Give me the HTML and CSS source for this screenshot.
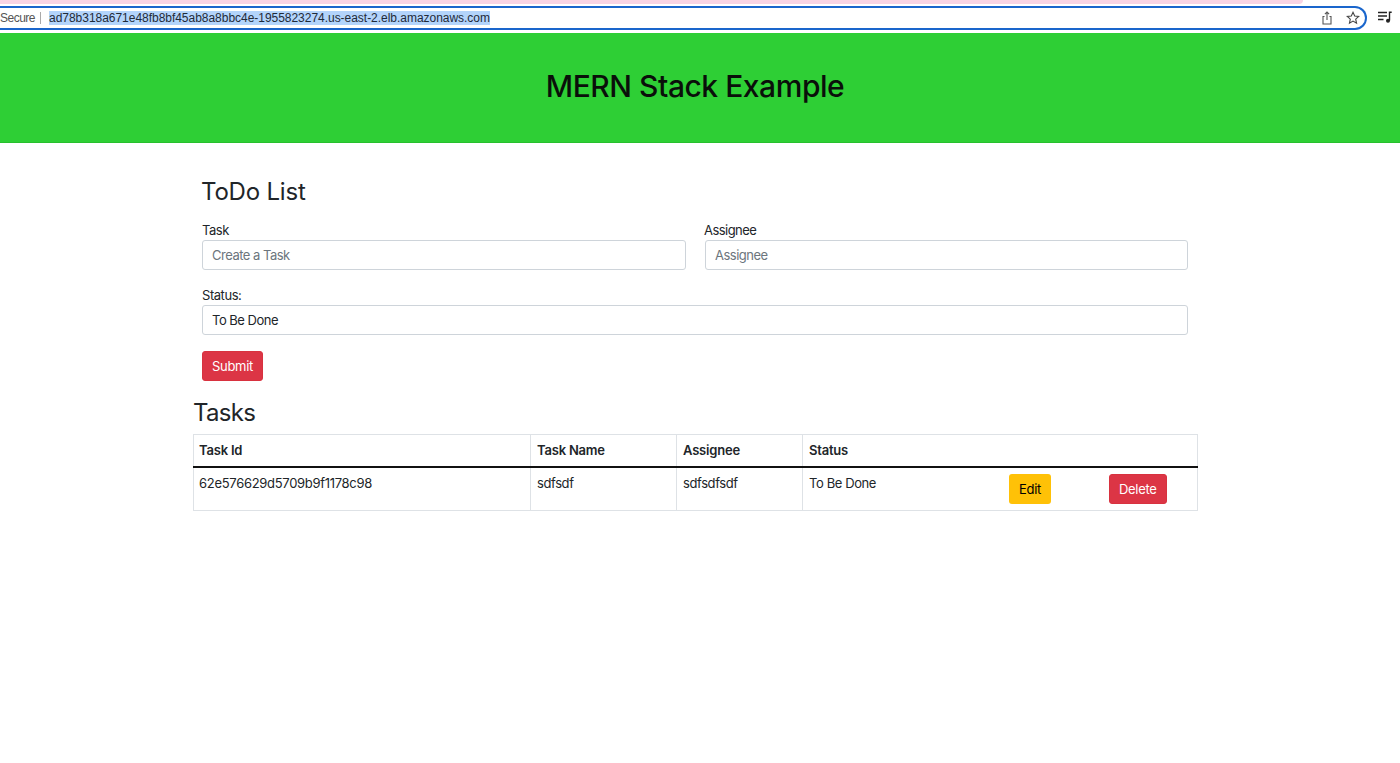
FILE: index.html
```html
<!DOCTYPE html>
<html lang="en">
<head>
<meta charset="utf-8">
<title>MERN Stack Example</title>
<link rel="stylesheet" href="styles.css">
</head>
<body>
<div class="chrome">
  <div class="pink"></div>
  <div class="bar">
    <div class="omnibox">
      <span class="secure">Secure</span>
      <span class="sep"></span>
      <span class="url">ad78b318a671e48fb8bf45ab8a8bbc4e-1955823274.us-east-2.elb.amazonaws.com</span>
      <span class="omni-icons">
        <svg class="ic" width="14" height="14" viewBox="0 0 14 14" fill="none" stroke="#555" stroke-width="1.1"><path d="M4.5 5.5H3v7.5h8V5.5H9.5"/><path d="M7 9V1.2M4.9 3.2 7 1.1l2.1 2.1"/></svg>
        <svg class="ic" width="14" height="14" viewBox="0 0 14 14" fill="none" stroke="#444" stroke-width="1.1"><path d="M7 1.3 8.7 5l4 .45-3 2.7.85 4L7 10.1l-3.55 2.05.85-4-3-2.7 4-.45z"/></svg>
      </span>
    </div>
    <svg class="media" width="14" height="12" viewBox="0 0 14 12" fill="none" stroke="#222" stroke-width="1.4"><path d="M0 1.5h9M0 5h9M0 8.5h5.5"/><path d="M11.5 9.5V1.2h2.2"/><circle cx="10" cy="9.8" r="1.3" fill="#222"/></svg>
  </div>
</div>
<header class="hero"><h1>MERN Stack Example</h1></header>
<main class="container">
  <form class="todo">
    <h2 class="form-title">ToDo List</h2>
    <div class="row">
      <div class="field">
        <label for="task">Task</label>
        <input id="task" class="control" placeholder="Create a Task">
      </div>
      <div class="field">
        <label for="assignee" class="shift-left">Assignee</label>
        <input id="assignee" class="control" placeholder="Assignee">
      </div>
    </div>
    <div class="field status">
      <label for="status">Status:</label>
      <input id="status" class="control" value="To Be Done">
    </div>
    <button type="button" class="btn danger">Submit</button>
  </form>
  <h2 class="tasks-title">Tasks</h2>
  <table class="tasks">
    <colgroup>
      <col class="c1"><col class="c2"><col class="c3"><col class="c4"><col class="c5"><col class="c6">
    </colgroup>
    <thead>
      <tr><th class="first">Task Id</th><th>Task Name</th><th>Assignee</th><th class="open-right">Status</th><th class="open"></th><th class="open-left"></th></tr>
    </thead>
    <tbody>
      <tr>
        <td class="first id">62e576629d5709b9f1178c98</td>
        <td>sdfsdf</td>
        <td>sdfsdfsdf</td>
        <td class="open-right">To Be Done</td>
        <td class="open action"><button type="button" class="btn warning">Edit</button></td>
        <td class="open-left action"><button type="button" class="btn danger">Delete</button></td>
      </tr>
    </tbody>
  </table>
</main>
</body>
</html>
```
FILE: styles.css
```css
* { box-sizing: border-box; }
html, body { margin: 0; padding: 0; background: #fff; }
body { font-family: Inter, "Liberation Sans", sans-serif; color: #212529; height: 763px; overflow: hidden; }

.chrome { height: 33px; background: #fff; position: relative; }
.pink { height: 4px; width: 1303px; background: #f8d4e4; border-bottom-right-radius: 6px; }
.bar { display: flex; align-items: flex-start; padding-top: 2px; }
.omnibox { width: 1367px; height: 24px; border: 2px solid #1a66cc; border-left: 0; border-radius: 0 12px 12px 0; display: flex; align-items: center; font-family: "Liberation Sans", sans-serif; font-size: 12px; color: #1f2a38; }
.secure { color: #555; margin-right: 5px; letter-spacing: -0.5px; }
.sep { width: 1px; height: 12px; background: #aaa; margin-right: 8px; }
.url { background: #b3d4fb; line-height: 14px; letter-spacing: -0.03px; }
.omni-icons { margin-left: auto; display: flex; gap: 12px; padding-right: 5px; align-items: center; }
.ic { display: block; }
.media { margin: 5px 0 0 11px; }

.hero { height: 110px; background: #2ecf35; display: flex; align-items: center; justify-content: center; border-bottom: 1px solid #27c02e; }
.hero h1 { margin: 0 0 3px -10px; font-size: 30px; font-weight: 500; line-height: 36px; color: #0a0f0a; letter-spacing: -0.45px; }

.container { width: 1004px; margin-left: 193px; }
.todo { padding: 34px 9px 0; font-size: 14px; }
.form-title { margin: 0 0 14px -1px; font-size: 24px; font-weight: 400; line-height: 30px; letter-spacing: -0.2px; }
.row { display: grid; grid-template-columns: 484px 483px; column-gap: 19px; }
.field { display: flex; flex-direction: column; }
.field label { font-size: 13px; line-height: 18px; padding-bottom: 1px; color: #212529; letter-spacing: -0.45px; }
.field .shift-left { margin-left: -1px; letter-spacing: -0.55px; }
.control { height: 30px; width: 100%; border: 1px solid #ced4da; border-radius: 3px; padding: 0 9px; font: 13px Inter, sans-serif; letter-spacing: -0.5px; color: #212529; background: #fff; }
.control::placeholder { color: #6c757d; opacity: 1; }
.status { margin-top: 16px; }
.status .control { width: 986px; }

.btn { height: 30px; border: 1px solid transparent; border-radius: 3px; font: 13px Inter, sans-serif; letter-spacing: -0.3px; padding: 0 9px; cursor: pointer; display: block; }
.danger { background: #dc3545; color: #fff; border-color: #d8323f; }
.warning { background: #ffc107; color: #000; }
.todo > .btn { margin-top: 16px; width: 61px; }

.tasks-title { margin: 17px 0 6px; font-size: 24px; font-weight: 400; line-height: 30px; letter-spacing: -0.7px; }
.tasks { width: 1004px; table-layout: fixed; border-collapse: collapse; font-size: 13px; color: #212529; }
.c1 { width: 337px; } .c2 { width: 146px; } .c3 { width: 126px; } .c4 { width: 199px; } .c5 { width: 100px; } .c6 { width: 96px; }
.tasks th, .tasks td { border: 1px solid #dee2e6; padding: 4px 6px; text-align: left; vertical-align: top; line-height: 20px; letter-spacing: -0.4px; }
.tasks th { font-weight: 600; height: 32px; padding-top: 5px; letter-spacing: -0.2px; border-bottom: 2px solid #111; }
.tasks td { height: 44px; padding-top: 5px; }
.tasks .first { padding-left: 5px; }
.tasks .id { letter-spacing: -0.3px; }
.tasks .action { padding-left: 7px; padding-top: 5px; }
.action .btn { margin-top: 1px; padding: 0 9.5px; }
.tasks .open-right { border-right: 0; }
.tasks .open { border-left: 0; border-right: 0; }
.tasks .open-left { border-left: 0; }
```
